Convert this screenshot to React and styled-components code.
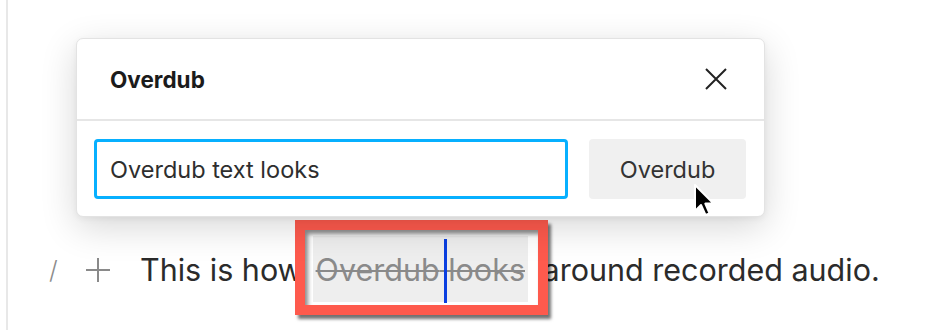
import React from 'react'
import styled, { createGlobalStyle } from 'styled-components'

const Global = createGlobalStyle`
  html, body {
    margin: 0;
    background: #ffffff;
    font-family: Inter, "Noto Sans", "Liberation Sans", sans-serif;
    -webkit-font-smoothing: antialiased;
  }
`;

const Frame = styled.div`
  position: relative;
  box-sizing: border-box;
  height: 330px;
  margin-left: 6px;
  border-left: 2px solid #e8e8e8;
  padding: 250px 0 0 41px;
  overflow: hidden;
`;

const Popover = styled.div`
  position: absolute;
  left: 68px;
  top: 38px;
  width: 689px;
  box-sizing: border-box;
  background: #ffffff;
  border: 1.5px solid #e3e3e3;
  border-radius: 7px;
  box-shadow: 0 10px 36px rgba(0, 0, 0, 0.16), 0 2px 6px rgba(0, 0, 0, 0.05);
  z-index: 2;
`;

const Header = styled.div`
  display: flex;
  align-items: center;
  justify-content: space-between;
  height: 80px;
  padding: 0 36px 0 33px;
  border-bottom: 2px solid #e6e6e6;
`;

const Title = styled.h2`
  margin: 0;
  font-size: 22.5px;
  font-weight: 700;
  color: #1b1b1b;
`;

const Close = styled.button`
  display: flex;
  align-items: center;
  justify-content: center;
  width: 24px;
  height: 24px;
  padding: 0;
  border: none;
  background: none;
  color: #222222;
`;

const Body = styled.div`
  display: flex;
  gap: 21px;
  padding: 18px 18px 17px 17px;
`;

const Input = styled.input`
  flex: 1;
  height: 60px;
  box-sizing: border-box;
  padding: 0 13px;
  border: 3px solid #07b0ff;
  border-radius: 4px;
  outline: none;
  font-family: inherit;
  font-size: 23.5px;
  color: #2e2e2e;
`;

const Button = styled.button`
  width: 157px;
  height: 60px;
  border: none;
  border-radius: 4px;
  background: #f0f0f0;
  font-family: inherit;
  font-size: 23.5px;
  color: #333333;
`;

const Pointer = styled.svg`
  position: absolute;
  left: 685px;
  top: 183px;
  z-index: 3;
`;

const Row = styled.div`
  display: flex;
  align-items: center;
  height: 40px;
`;

const Slash = styled.span`
  width: 9px;
  margin-right: 28px;
  font-size: 25px;
  font-weight: 300;
  color: #8c8c8c;
`;

const Plus = styled.svg`
  margin-right: 30px;
  color: #8a8a8a;
`;

const Sentence = styled.p`
  margin: 0;
  white-space: nowrap;
  font-size: 30.5px;
  line-height: 40px;
  color: #2b2b2b;
`;

const Struck = styled.span`
  position: relative;
  padding: 15px 3px 13.5px;
  margin: 0 6px 0 10px;
  background: #eeeeee;
  color: #8a8a8a;
  text-decoration: line-through;
  text-decoration-thickness: 2px;

  &::after {
    content: '';
    position: absolute;
    left: -18px;
    right: -20px;
    top: -16px;
    bottom: -13px;
    border: 10px solid #fe5a4d;
    box-shadow: 3px 4px 3px rgba(0, 0, 0, 0.55), inset 3px 4px 4px rgba(0, 0, 0, 0.45);
  }
`;

const Caret = styled.span`
  position: relative;
  display: inline-block;
  width: 0;
  height: 0;

  &::before {
    content: '';
    position: absolute;
    left: 4px;
    bottom: -22px;
    width: 3px;
    height: 64px;
    background: #0a3fe0;
  }
`;

export default function App() {
  return (
    <>
      <Global />
      <Frame>
        <Popover>
          <Header>
            <Title>Overdub</Title>
            <Close aria-label="Close">
              <svg width="22" height="22" viewBox="0 0 22 22" fill="none" stroke="currentColor" strokeWidth="2">
                <path d="M1 1 L21 21 M21 1 L1 21" />
              </svg>
            </Close>
          </Header>
          <Body>
            <Input defaultValue="Overdub text looks" />
            <Button>Overdub</Button>
          </Body>
        </Popover>
        <Pointer width="24" height="36" viewBox="0 0 24 36">
          <path
            d="M2 2 L2 28 L8 22 L12.5 32 L16.5 30.3 L12.3 20.6 L20.5 20.6 Z"
            fill="#000"
            stroke="#fff"
            strokeWidth="2"
            strokeLinejoin="round"
          />
        </Pointer>
        <Row>
          <Slash>/</Slash>
          <Plus width="24" height="24" viewBox="0 0 24 24" fill="none" stroke="currentColor" strokeWidth="2">
            <path d="M12 0 V24 M0 12 H24" />
          </Plus>
          <Sentence>
            This is how<Struck>Overdub<Caret /> looks</Struck> around recorded audio.
          </Sentence>
        </Row>
      </Frame>
    </>
  )
}
